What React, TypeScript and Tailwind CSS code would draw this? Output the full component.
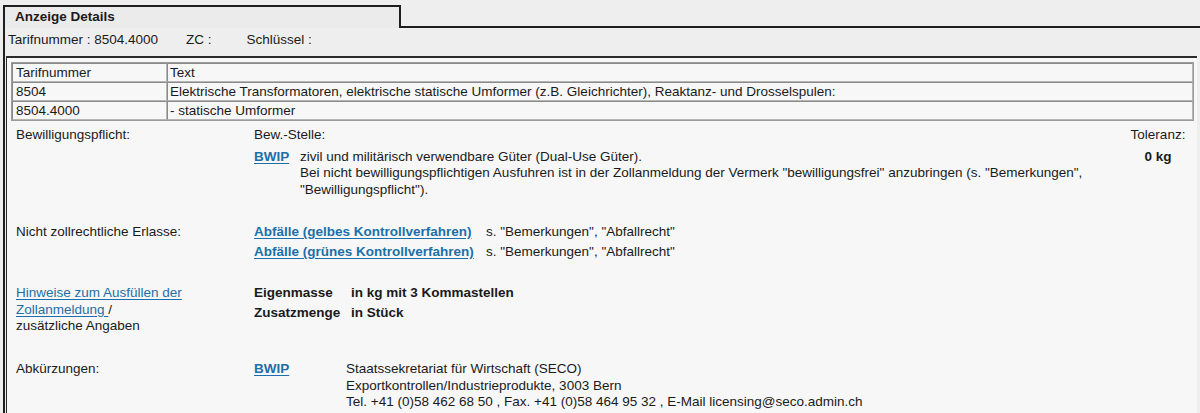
import React from "react";

const linkCls = "text-[#1c6fa8] underline underline-offset-[2px]";
const cellCls =
  "h-[19px] py-0 border border-t-[#8a8a8a] border-l-[#8a8a8a] border-b-[#b5b5b5] border-r-[#b5b5b5] leading-[16px]";

export default function App() {
  return (
    <div className="w-[1200px] h-[413px] overflow-hidden bg-[#eeeeee] text-[#1a1a1a] font-['Liberation_Sans',Arial,sans-serif] text-[13.5px] leading-[16.5px]">
      {/* Tab header */}
      <div className="flex pt-[5px]">
        <div className="ml-[3px] w-[398px] h-[23px] border-2 border-b-0 border-[#1e1e1e] bg-[#ebebeb] pl-[10px] pt-[2px] font-bold leading-[16px]">
          Anzeige Details
        </div>
        <div className="flex-1 h-[23px] border-b-2 border-[#1e1e1e]" />
      </div>

      {/* Body */}
      <div className="ml-[3px] border-l-2 border-[#1e1e1e] h-[385px]">
        <div className="h-[28px] pt-[4px] pl-[3px] flex leading-[16px]">
          <span>Tarifnummer : 8504.4000</span>
          <span className="ml-[28px]">ZC :</span>
          <span className="ml-[35px]">Schlüssel :</span>
        </div>

        <div className="ml-[1px] mr-[3px] h-full border-l border-t-2 border-[#2a2a2a] bg-[#f7f7f7] pl-[4px] pt-[4px]">
          <table className="w-[1183px] border-separate border-spacing-0 border border-[#9a9a9a]">
            <tbody>
              <tr>
                <td className={`${cellCls} w-[155px] px-[3px]`}>Tarifnummer</td>
                <td className={`${cellCls} px-[2px]`}>Text</td>
              </tr>
              <tr>
                <td className={`${cellCls} w-[155px] px-[3px]`}>8504</td>
                <td className={`${cellCls} px-[2px]`}>
                  Elektrische Transformatoren, elektrische statische Umformer (z.B. Gleichrichter), Reaktanz- und Drosselspulen:
                </td>
              </tr>
              <tr>
                <td className={`${cellCls} w-[155px] px-[3px]`}>8504.4000</td>
                <td className={`${cellCls} px-[2px]`}>- statische Umformer</td>
              </tr>
            </tbody>
          </table>

          {/* Section 1 */}
          <div className="flex mt-[6px] pl-[5px]">
            <div className="w-[238px] shrink-0">Bewilligungspflicht:</div>
            <div className="flex-1">
              <div>Bew.-Stelle:</div>
              <div className="flex mt-[5px]">
                <a className={`${linkCls} font-bold w-[46px] shrink-0`}>BWIP</a>
                <div>
                  zivil und militärisch verwendbare Güter (Dual-Use Güter).
                  <br />
                  Bei nicht bewilligungspflichtigen Ausfuhren ist in der Zollanmeldung der Vermerk "bewilligungsfrei" anzubringen (s. "Bemerkungen", "Bewilligungspflicht").
                </div>
              </div>
            </div>
            <div className="w-[78px] shrink-0 text-center">
              <div>Toleranz:</div>
              <div className="mt-[5px] font-bold">0 kg</div>
            </div>
          </div>

          {/* Section 2 */}
          <div className="flex mt-[25.5px] pl-[5px]">
            <div className="w-[238px] shrink-0">Nicht zollrechtliche Erlasse:</div>
            <div className="flex flex-col gap-[3.5px]">
              <div className="flex">
                <a className={`${linkCls} font-bold w-[232px] shrink-0`}>Abfälle (gelbes Kontrollverfahren)</a>
                <span>s. "Bemerkungen", "Abfallrecht"</span>
              </div>
              <div className="flex">
                <a className={`${linkCls} font-bold w-[232px] shrink-0`}>Abfälle (grünes Kontrollverfahren)</a>
                <span>s. "Bemerkungen", "Abfallrecht"</span>
              </div>
            </div>
          </div>

          {/* Section 3 */}
          <div className="flex mt-[25px] pl-[5px]">
            <div className="w-[238px] shrink-0">
              <a className={linkCls}>Hinweise zum Ausfüllen der Zollanmeldung </a>/
              <br />
              zusätzliche Angaben
            </div>
            <div className="flex flex-col gap-[3.5px] font-bold">
              <div className="flex">
                <span className="w-[97px] shrink-0">Eigenmasse</span>
                <span>in kg mit 3 Kommastellen</span>
              </div>
              <div className="flex">
                <span className="w-[97px] shrink-0">Zusatzmenge</span>
                <span>in Stück</span>
              </div>
            </div>
          </div>

          {/* Section 4 */}
          <div className="flex mt-[26.5px] pl-[5px]">
            <div className="w-[238px] shrink-0">Abkürzungen:</div>
            <div className="flex">
              <a className={`${linkCls} font-bold w-[92px] shrink-0`}>BWIP</a>
              <div>
                Staatssekretariat für Wirtschaft (SECO)
                <br />
                Exportkontrollen/Industrieprodukte, 3003 Bern
                <br />
                Tel. +41 (0)58 462 68 50 , Fax. +41 (0)58 464 95 32 , E-Mail licensing@seco.admin.ch
              </div>
            </div>
          </div>
        </div>
      </div>
    </div>
  );
}
